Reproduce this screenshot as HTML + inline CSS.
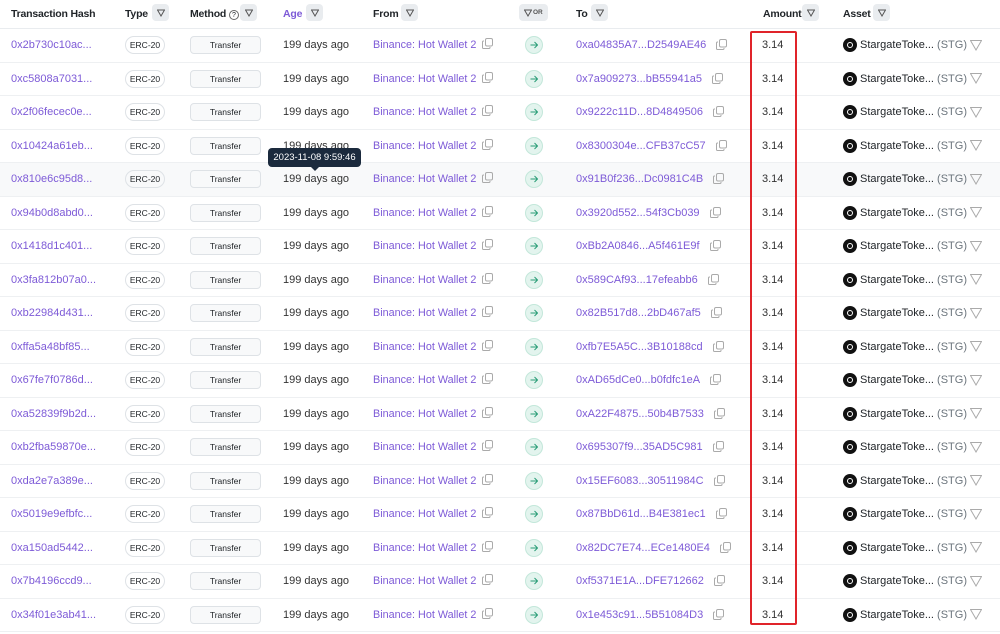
<!DOCTYPE html>
<html><head><meta charset="utf-8"><style>
*{margin:0;padding:0;box-sizing:border-box}
body{width:1000px;height:634px;background:#fff;font-family:"Liberation Sans",sans-serif;font-size:11px;color:#212529;position:relative;overflow:hidden}
.hdr{position:absolute;left:0;top:0;width:1000px;height:29px;border-bottom:1px solid #e9ecef}
.hdr span{position:absolute;top:8px;font-weight:bold;font-size:10.5px;letter-spacing:-0.2px;color:#212529}
.fb{position:absolute;top:4px;width:17px;height:17px;background:#e9ecef;border-radius:4px}
.fb svg{position:absolute;left:4.5px;top:4.5px}
.row{position:absolute;left:0;width:1000px;height:33.5px;border-bottom:1px solid #eef0f2}
.row>*{position:absolute;top:50%;transform:translateY(-50%);white-space:nowrap}
.p{color:#7d5ad7}
.erc{left:125px;width:40px;height:18px;border:1px solid #dee2e6;border-radius:9px;font-size:8.5px;text-align:center;line-height:16px}
.m{left:190px;width:71px;height:18px;border:1px solid #dee2e6;background:#f8f9fa;border-radius:4px;font-size:8.5px;text-align:center;line-height:16px}
.age{left:283px;color:#333}
.from{left:373px;font-size:10.8px}
.c1{left:482px}
.arr{left:525px;width:18px;height:18px;border-radius:50%;background:#e3f4ee;border:1px solid #c3e7da}
.arr svg{position:absolute;left:4px;top:4px}
.to{left:576px}
.to svg{margin-left:10px;vertical-align:-2px}
.amt{left:762px;color:#333}
.as{left:843px;display:flex;align-items:center}
.coin{width:14px;height:14px;border-radius:50%;background:#111;margin-right:3px;position:relative}
.coin:after{content:"";position:absolute;left:4px;top:4px;width:4px;height:4px;border:1px solid #fff;border-radius:50%}
.g{color:#6c757d}
</style></head><body>
<div class="hdr">
<span style="left:11px">Transaction Hash</span>
<span style="left:125px">Type</span><div class="fb" style="left:152px"><svg width="8" height="8" viewBox="0 0 8 8"><path d="M0.5 1h7L4 7z" fill="none" stroke="#555" stroke-width="1"/></svg></div>
<span style="left:190px">Method <span style="position:static;font-weight:normal;display:inline-block;width:10px;height:10px;border:1px solid #666;border-radius:50%;font-size:7px;text-align:center;line-height:9px;vertical-align:0">?</span></span><div class="fb" style="left:240px"><svg width="8" height="8" viewBox="0 0 8 8"><path d="M0.5 1h7L4 7z" fill="none" stroke="#555"/></svg></div>
<span style="left:283px;color:#7d5ad7">Age</span><div class="fb" style="left:306px"><svg width="8" height="8" viewBox="0 0 8 8"><path d="M0.5 1h7L4 7z" fill="none" stroke="#555"/></svg></div>
<span style="left:373px">From</span><div class="fb" style="left:401px"><svg width="8" height="8" viewBox="0 0 8 8"><path d="M0.5 1h7L4 7z" fill="none" stroke="#555"/></svg></div>
<div class="fb" style="left:519px;width:29px"><svg width="8" height="8" viewBox="0 0 8 8"><path d="M0.5 1h7L4 7z" fill="none" stroke="#555"/></svg><b style="position:absolute;left:14px;top:5px;font-size:6.5px;color:#555">OR</b></div>
<span style="left:576px">To</span><div class="fb" style="left:591px"><svg width="8" height="8" viewBox="0 0 8 8"><path d="M0.5 1h7L4 7z" fill="none" stroke="#555"/></svg></div>
<span style="left:763px">Amount</span><div class="fb" style="left:802px"><svg width="8" height="8" viewBox="0 0 8 8"><path d="M0.5 1h7L4 7z" fill="none" stroke="#555"/></svg></div>
<span style="left:843px">Asset</span><div class="fb" style="left:873px"><svg width="8" height="8" viewBox="0 0 8 8"><path d="M0.5 1h7L4 7z" fill="none" stroke="#555"/></svg></div>
</div>
<div id="rows"></div>
<script>
var h=["0x2b730c10ac...","0xc5808a7031...","0x2f06fecec0e...","0x10424a61eb...","0x810e6c95d8...","0x94b0d8abd0...","0x1418d1c401...","0x3fa812b07a0...","0xb22984d431...","0xffa5a48bf85...","0x67fe7f0786d...","0xa52839f9b2d...","0xb2fba59870e...","0xda2e7a389e...","0x5019e9efbfc...","0xa150ad5442...","0x7b4196ccd9...","0x34f01e3ab41..."];
var t=["0xa04835A7...D2549AE46","0x7a909273...bB55941a5","0x9222c11D...8D4849506","0x8300304e...CFB37cC57","0x91B0f236...Dc0981C4B","0x3920d552...54f3Cb039","0xBb2A0846...A5f461E9f","0x589CAf93...17efeabb6","0x82B517d8...2bD467af5","0xfb7E5A5C...3B10188cd","0xAD65dCe0...b0fdfc1eA","0xA22F4875...50b4B7533","0x695307f9...35AD5C981","0x15EF6083...30511984C","0x87BbD61d...B4E381ec1","0x82DC7E74...ECe1480E4","0xf5371E1A...DFE712662","0x1e453c91...5B51084D3"];
var cp='<svg width="11" height="11" viewBox="0 0 11 11" fill="none" stroke="#aaa"><rect x="3.5" y="0.5" width="7" height="7.5" rx="1.5"/><path d="M2 3H1.5a1 1 0 0 0-1 1v5.5a1 1 0 0 0 1 1H7a1 1 0 0 0 1-1V9"/></svg>';
var s='';
for(var i=0;i<18;i++){
s+='<div class="row" style="top:'+(29+i*33.5)+'px'+(i==4?';background:#f8f9fa':'')+'"><span class="p" style="left:11px">'+h[i]+'</span><div class="erc">ERC-20</div><div class="m">Transfer</div><span class="age">199 days ago</span><span class="from p">Binance: Hot Wallet 2</span><span class="c1">'+cp+'</span><div class="arr"><svg width="8" height="8" viewBox="0 0 8 8"><path d="M0.5 4h7M4.5 1l3 3-3 3" fill="none" stroke="#2a9d77" stroke-width="1"/></svg></div><span class="to p">'+t[i]+cp+'</span><span class="amt">3.14</span><div class="as"><div class="coin"></div>StargateToke...&nbsp;<span class="g">(STG)</span>&nbsp;<svg width="12" height="11" viewBox="0 0 12 11"><path d="M0.5 0.5h11L6 10z" fill="none" stroke="#aaa"/></svg></div></div>';
}
document.getElementById('rows').innerHTML=s;
</script>
<div style="position:absolute;left:750px;top:31px;width:47px;height:594px;border:2px solid #e0242a;border-radius:2px"></div>
<div style="position:absolute;left:268px;top:148px;width:93px;height:19px;background:#1b2a3d;border-radius:4px;color:#fff;font-size:9.5px;text-align:center;line-height:19px">2023-11-08 9:59:46</div>
<div style="position:absolute;left:311px;top:167px;width:0;height:0;border-left:4px solid transparent;border-right:4px solid transparent;border-top:4px solid #1b2a3d"></div>
</body></html>
